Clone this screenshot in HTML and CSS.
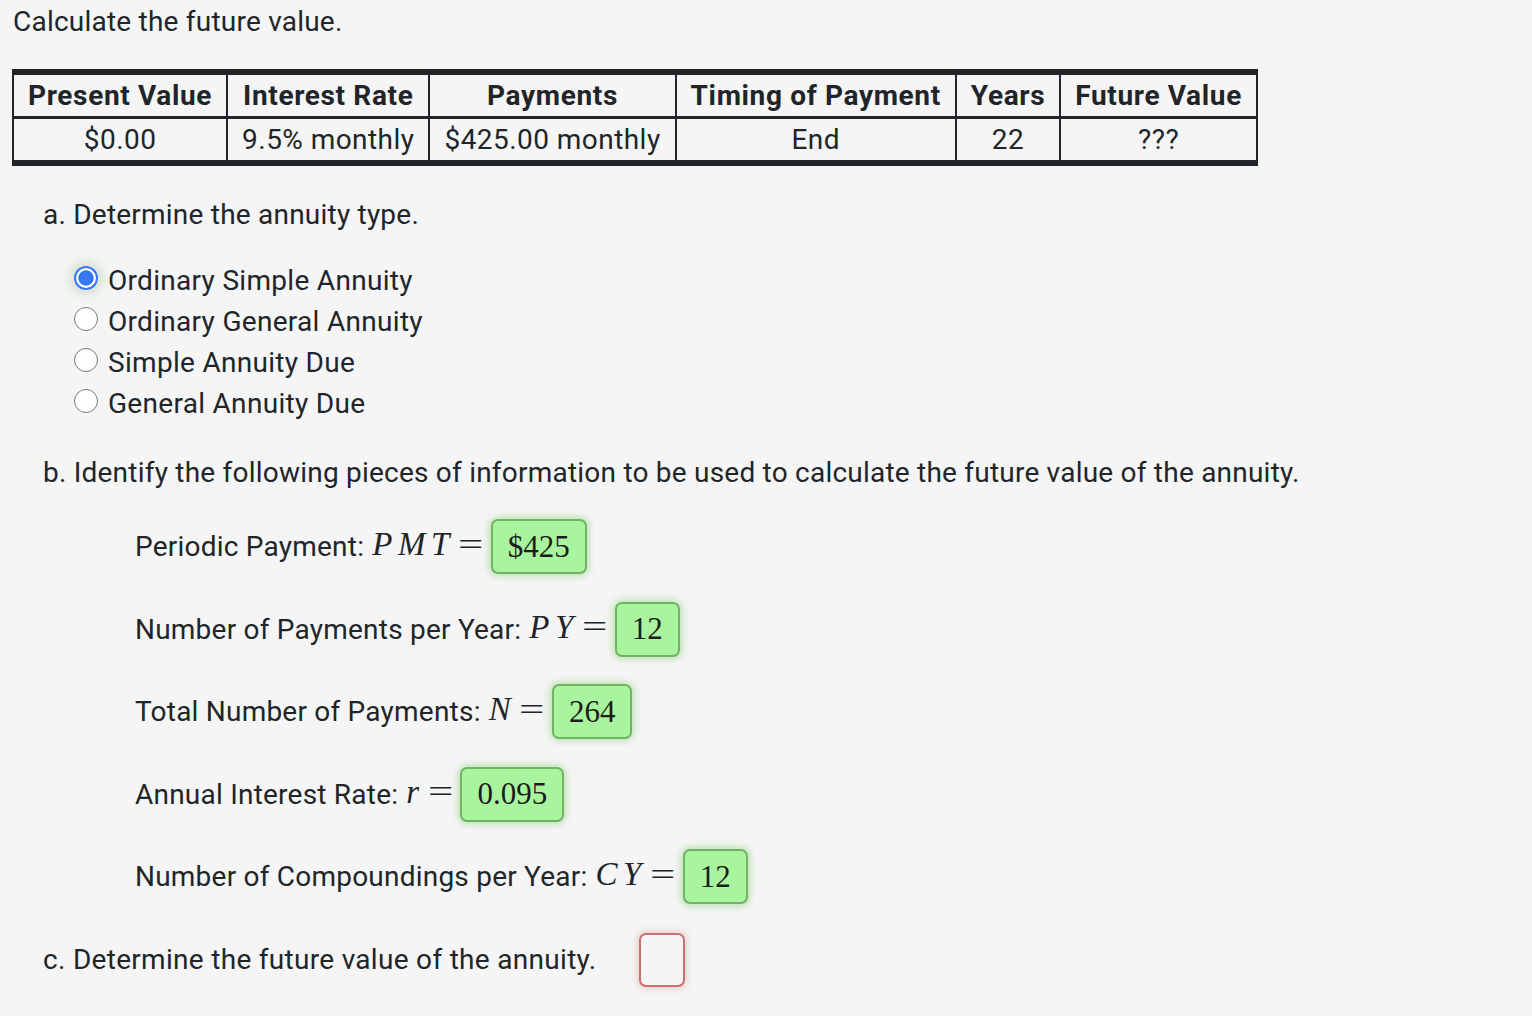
FILE: index.html
```html
<!DOCTYPE html>
<html>
<head>
<meta charset="utf-8">
<link rel="stylesheet" href="styles.css">
</head>
<body>
<div class="page">
  <p class="title">Calculate the future value.</p>
  <table class="data">
    <thead>
      <tr>
        <th>Present Value</th>
        <th>Interest Rate</th>
        <th>Payments</th>
        <th>Timing of Payment</th>
        <th>Years</th>
        <th>Future Value</th>
      </tr>
    </thead>
    <tbody>
      <tr>
        <td>$0.00</td>
        <td>9.5% monthly</td>
        <td>$425.00 monthly</td>
        <td>End</td>
        <td>22</td>
        <td>???</td>
      </tr>
    </tbody>
  </table>

  <p class="part part-a">a. Determine the annuity type.</p>
  <div class="options">
    <label class="option"><span class="radio checked"></span><span>Ordinary Simple Annuity</span></label>
    <label class="option"><span class="radio"></span><span>Ordinary General Annuity</span></label>
    <label class="option"><span class="radio"></span><span>Simple Annuity Due</span></label>
    <label class="option"><span class="radio"></span><span>General Annuity Due</span></label>
  </div>

  <p class="part part-b">b. Identify the following pieces of information to be used to calculate the future value of the annuity.</p>
  <div class="items">
    <div class="item"><span class="lbl">Periodic Payment:</span><span class="mi">PMT</span><span class="rel">=</span><span class="box ok">$425</span></div>
    <div class="item"><span class="lbl">Number of Payments per Year:</span><span class="mi">PY</span><span class="rel">=</span><span class="box ok">12</span></div>
    <div class="item"><span class="lbl">Total Number of Payments:</span><span class="mi">N</span><span class="rel">=</span><span class="box ok">264</span></div>
    <div class="item"><span class="lbl">Annual Interest Rate:</span><span class="mi">r</span><span class="rel">=</span><span class="box ok">0.095</span></div>
    <div class="item"><span class="lbl">Number of Compoundings per Year:</span><span class="mi">CY</span><span class="rel">=</span><span class="box ok">12</span></div>
  </div>

  <div class="part-c">
    <span>c. Determine the future value of the annuity.</span>
    <span class="box empty"></span>
  </div>
</div>
</body>
</html>
```

FILE: styles.css
```css
html, body {
  margin: 0;
  padding: 0;
  background: #f5f5f5;
}
body {
  font-family: Roboto, "Liberation Sans", "Noto Sans", sans-serif;
  font-size: 28px;
  letter-spacing: 0.22px;
  color: #212529;
}
.page {
  padding: 4px 12px 20px 12px;
}
.title {
  margin: 0 0 0 1px;
  line-height: 36px;
}
.data {
  margin-top: 29px;
  border-collapse: collapse;
  border-top: 6px solid #212529;
  border-bottom: 6px solid #212529;
  border-left: 2px solid #212529;
  border-right: 2px solid #212529;
}
.data th, .data td {
  border-left: 2px solid #212529;
  border-right: 2px solid #212529;
  padding: 6px 14px;
  text-align: center;
  line-height: 29px;
  white-space: nowrap;
}
.data td {
  letter-spacing: 0.45px;
}
.data th {
  font-weight: 700;
  letter-spacing: 0.65px;
  border-bottom: 3px solid #212529;
}
.part {
  margin: 0;
  line-height: 36px;
}
.part-a {
  margin: 31px 0 0 31px;
}
.options {
  margin: 27px 0 0 62px;
  display: flex;
  flex-direction: column;
}
.option {
  height: 41px;
  display: flex;
  align-items: center;
  gap: 10px;
  letter-spacing: 0.3px;
}
.radio {
  width: 24px;
  height: 24px;
  box-sizing: border-box;
  border-radius: 50%;
  border: 1.5px solid #777;
  background: #fff;
  margin-top: -6px;
  flex: none;
}
.radio.checked {
  border: 2.5px solid #3478f6;
  background: radial-gradient(circle, #3478f6 0 52%, #fff 56%);
  box-shadow: 0 0 0 1px #e6e6e6, 0 0 10px 5px rgba(140, 190, 120, 0.3);
}
.part-b {
  margin: 31px 0 0 31px;
}
.items {
  margin: 28px 0 0 123px;
  display: flex;
  flex-direction: column;
  gap: 27.5px;
}
.item {
  height: 55px;
  display: flex;
  align-items: center;
}
.lbl {
  margin-right: 8px;
}
.mi {
  font-family: "Liberation Serif", "DejaVu Serif", serif;
  font-style: italic;
  font-size: 33px;
  letter-spacing: 0.17em;
  margin-right: -5px;
  margin-top: -4px;
}
.rel {
  font-family: "Liberation Serif", "DejaVu Serif", serif;
  font-size: 31px;
  display: inline-block;
  transform: scaleX(1.45);
  margin: -4px 11px 0 12px;
}
.box {
  box-sizing: border-box;
  height: 55px;
  display: inline-flex;
  align-items: center;
  border-radius: 7px;
  letter-spacing: 0;
}
.box.ok {
  padding: 0 15px;
  background: #a8f59e;
  border: 2px solid #72b267;
  box-shadow: 0 0 7px 2px rgba(110, 200, 90, 0.45);
  font-family: "Liberation Serif", "DejaVu Serif", serif;
  font-size: 31px;
  color: #1c1c1c;
}
.part-c {
  margin: 28px 0 0 31px;
  display: flex;
  align-items: center;
  gap: 43px;
  height: 55px;
  letter-spacing: 0.3px;
}
.box.empty {
  width: 46px;
  height: 54px;
  background: #f5f5f5;
  border: 2px solid #c8726e;
  box-shadow: 0 0 6px 2px rgba(210, 120, 120, 0.3);
}
```
